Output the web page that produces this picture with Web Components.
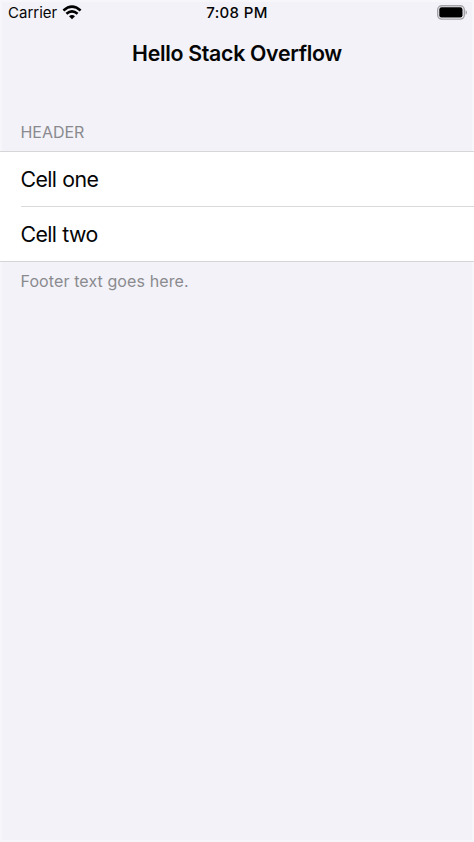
<!DOCTYPE html>
<html lang="en"><head><meta charset="utf-8"><title>Hello Stack Overflow</title>
<style>html,body{margin:0;background:#f2f2f8}body{font-family:Inter,"Liberation Sans",sans-serif;color:#050506}</style></head><body>
<app-screen>
<status-bar slot="top"></status-bar>
<nav-title slot="top">Hello Stack Overflow</nav-title>
<table-section><span slot="header">HEADER</span><table-cell>Cell one</table-cell><table-cell>Cell two</table-cell><span slot="footer">Footer text goes here.</span></table-section>
</app-screen>
<script>
const define=(n,html)=>customElements.define(n,class extends HTMLElement{constructor(){super();this.attachShadow({mode:'open'}).innerHTML=html}});
define('app-screen',`<style>:host{display:flex;flex-direction:column;height:842px;overflow:hidden;background:#f2f2f8;box-shadow:inset 0 0 0 2px #f7f7fb}</style><slot name="top"></slot><slot></slot>`);
define('status-bar',`<style>:host{display:grid;grid-template-columns:1fr auto 1fr;align-items:center;height:26px;padding:0 7px 0 8px;font-size:15px;line-height:26px;white-space:nowrap}
.l{display:flex;align-items:center;gap:5px}.l svg{margin-bottom:1px}.t{font-weight:500;letter-spacing:.35px;margin-right:1px}.b{justify-self:end;margin-bottom:2px}svg{display:block}</style>
<div class="l"><span>Carrier</span><svg width="20" height="15" viewBox="0 0 20 15"><g fill="none" stroke="#000" stroke-width="2.5"><path d="M1.4 5.5Q10-2.2 18.6 5.5"/><path d="M4.4 8.8Q10 4 15.6 8.8"/></g><path d="M7 11.2Q10 8.6 13 11.2L10 14.2Z"/></svg></div><span class="t">7:08 PM</span>
<svg class="b" width="30" height="15" viewBox="0 0 30 15"><rect x=".7" y=".7" width="26.6" height="13.4" rx="4" fill="none" stroke="#a4a4a8" stroke-width="1.4"/><rect x="2.3" y="2.3" width="23.2" height="10.2" rx="2.2"/><path d="M28.6 5Q29.8 5.8 29.8 7.4T28.6 9.8Z" fill="#96969a"/></svg>`);
define('nav-title',`<style>:host{display:block;height:54px;line-height:54px;text-align:center;font-size:21.3px;font-weight:600;letter-spacing:-.3px}</style><slot></slot>`);
define('table-section',`<style>:host{display:block;padding-top:40px}.h,.f{color:#8a8a8e;font-size:16px;padding-left:20.5px}.h{height:31px;line-height:25px;letter-spacing:-.05px}.f{line-height:39px;letter-spacing:.1px}.c{border-top:1px solid #d6d6d9;border-bottom:1px solid #d6d6d9;background:#fff}</style><div class="h"><slot name="header"></slot></div><div class="c"><slot></slot></div><div class="f"><slot name="footer"></slot></div>`);
define('table-cell',`<style>:host{display:block;background:#fff;padding-left:20.5px}div{height:54px;line-height:54px;font-size:21.3px;letter-spacing:-.6px;word-spacing:.5px}:host(:not(:last-of-type)) div{border-bottom:1px solid #d9d9dc}</style><div><slot></slot></div>`);
</script></body></html>
